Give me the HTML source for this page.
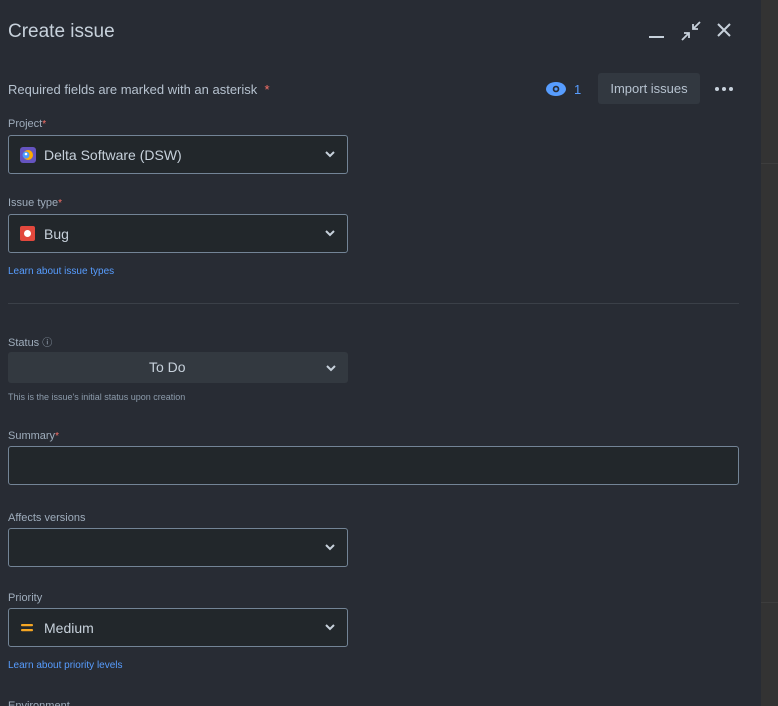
<!DOCTYPE html>
<html><head><meta charset="utf-8"><style>
*{box-sizing:border-box;margin:0;padding:0}
html,body{width:778px;height:706px;overflow:hidden}
body{background:#333333;font-family:"Liberation Sans",sans-serif;position:relative}
#panel{position:absolute;left:0;top:0;width:761px;height:706px;background:#282c34;overflow:hidden}
.strip1{position:absolute;left:761px;top:163px;width:17px;height:1px;background:#3d3d3d}
.strip2{position:absolute;left:761px;top:602px;width:17px;height:1px;background:#3d3d3d}
.abs{position:absolute}
.title{left:8px;top:21px;font-size:19px;color:#c7d1db}
.req{left:8px;top:82px;font-size:13px;color:#b6c2cf}
.star{color:#f87168}
.lbl{position:absolute;left:8px;font-size:11px;color:#9fadbc}
.lbl .star{font-size:10px}
.sel{position:absolute;left:8px;width:340px;height:39px;border:1px solid #738496;border-radius:3px;background:#22272b;color:#c7d1db;font-size:14px}
.sel .txt{position:absolute;left:35px;top:11px}
.chev{position:absolute;right:12px;top:14px}
.link{position:absolute;left:8px;font-size:10px;color:#579dff}
.help{position:absolute;left:8px;font-size:9px;color:#8c9bab}
</style></head><body>
<div id="panel">
<div class="abs title">Create issue</div>
<svg class="abs" style="left:648px;top:27px" width="18" height="12"><rect x="1" y="9" width="15" height="2" fill="#c7d1db"/></svg>
<svg class="abs" style="left:681px;top:21px" width="20" height="20" stroke="#c7d1db" stroke-width="1.8" fill="none"><path d="M19 1L12 8M12 3v5h5"/><path d="M1 19L8 12M3 12h5v5"/></svg>
<svg class="abs" style="left:716px;top:22px" width="16" height="16" stroke="#c7d1db" stroke-width="2"><path d="M2 2L14 14M14 2L2 14"/></svg>
<div class="abs req">Required fields are marked with an asterisk&nbsp; <span class="star">*</span></div>
<svg class="abs" style="left:546px;top:82px" width="20" height="14"><ellipse cx="10" cy="7" rx="10" ry="7" fill="#579dff"/><circle cx="10" cy="7" r="3.3" fill="#282c34"/><circle cx="10" cy="7" r="1.6" fill="#579dff"/></svg>
<div class="abs" style="left:574px;top:82px;font-size:13px;color:#579dff">1</div>
<div class="abs" style="left:598px;top:73px;width:102px;height:31px;background:#323840;border-radius:3px;color:#b6c2cf;font-size:13px;line-height:31px;text-align:center">Import issues</div>
<svg class="abs" style="left:714px;top:86px" width="20" height="6" fill="#c7d1db"><circle cx="3" cy="3" r="2"/><circle cx="10" cy="3" r="2"/><circle cx="17" cy="3" r="2"/></svg>

<div class="lbl" style="top:118px">Project<span class="star">*</span></div>
<div class="sel" style="top:135px"><svg class="abs" style="left:11px;top:11px" width="16" height="16"><rect width="16" height="16" rx="3" fill="#6554c0"/><circle cx="8" cy="8" r="5" fill="#ffab00"/><circle cx="6" cy="8" r="3.5" fill="#4c9aff"/><circle cx="6" cy="7" r="1.3" fill="#fff"/></svg><span class="txt">Delta Software (DSW)</span><svg class="chev" width="10" height="8" fill="none" stroke="#c7d1db" stroke-width="2"><path d="M1 2l4 4 4-4"/></svg></div>

<div class="lbl" style="top:197px">Issue type<span class="star">*</span></div>
<div class="sel" style="top:214px"><svg class="abs" style="left:11px;top:11px" width="15" height="15"><rect width="15" height="15" rx="2" fill="#e2483d"/><circle cx="7.5" cy="7.5" r="3.5" fill="#fff"/></svg><span class="txt">Bug</span><svg class="chev" width="10" height="8" fill="none" stroke="#c7d1db" stroke-width="2"><path d="M1 2l4 4 4-4"/></svg></div>
<div class="link" style="top:266px">Learn about issue types</div>

<div class="abs" style="left:8px;top:303px;width:731px;height:1px;background:#3b4048"></div>

<div class="lbl" style="top:334px">Status <span style="font-size:10px">ⓘ</span></div>
<div class="abs" style="left:8px;top:352px;width:340px;height:31px;background:#333940;border-radius:3px;color:#c7d1db;font-size:14px;line-height:31px"><span style="position:absolute;left:141px">To Do</span><svg class="chev" style="top:12px" width="10" height="8" fill="none" stroke="#c7d1db" stroke-width="2"><path d="M1 2l4 4 4-4"/></svg></div>
<div class="help" style="top:392px">This is the issue's initial status upon creation</div>

<div class="lbl" style="top:430px">Summary<span class="star">*</span></div>
<div class="sel" style="top:446px;width:731px"></div>

<div class="lbl" style="top:512px">Affects versions</div>
<div class="sel" style="top:528px"><svg class="chev" width="10" height="8" fill="none" stroke="#c7d1db" stroke-width="2"><path d="M1 2l4 4 4-4"/></svg></div>

<div class="lbl" style="top:592px">Priority</div>
<div class="sel" style="top:608px"><svg class="abs" style="left:12px;top:14px" width="12" height="10" fill="#f5a623"><rect y="1" width="12" height="2.2" rx="1"/><rect y="6" width="12" height="2.2" rx="1"/></svg><span class="txt">Medium</span><svg class="chev" width="10" height="8" fill="none" stroke="#c7d1db" stroke-width="2"><path d="M1 2l4 4 4-4"/></svg></div>
<div class="link" style="top:660px">Learn about priority levels</div>
<div class="lbl" style="top:700px">Environment</div>
</div>
<div class="strip1"></div><div class="strip2"></div>
</body></html>
